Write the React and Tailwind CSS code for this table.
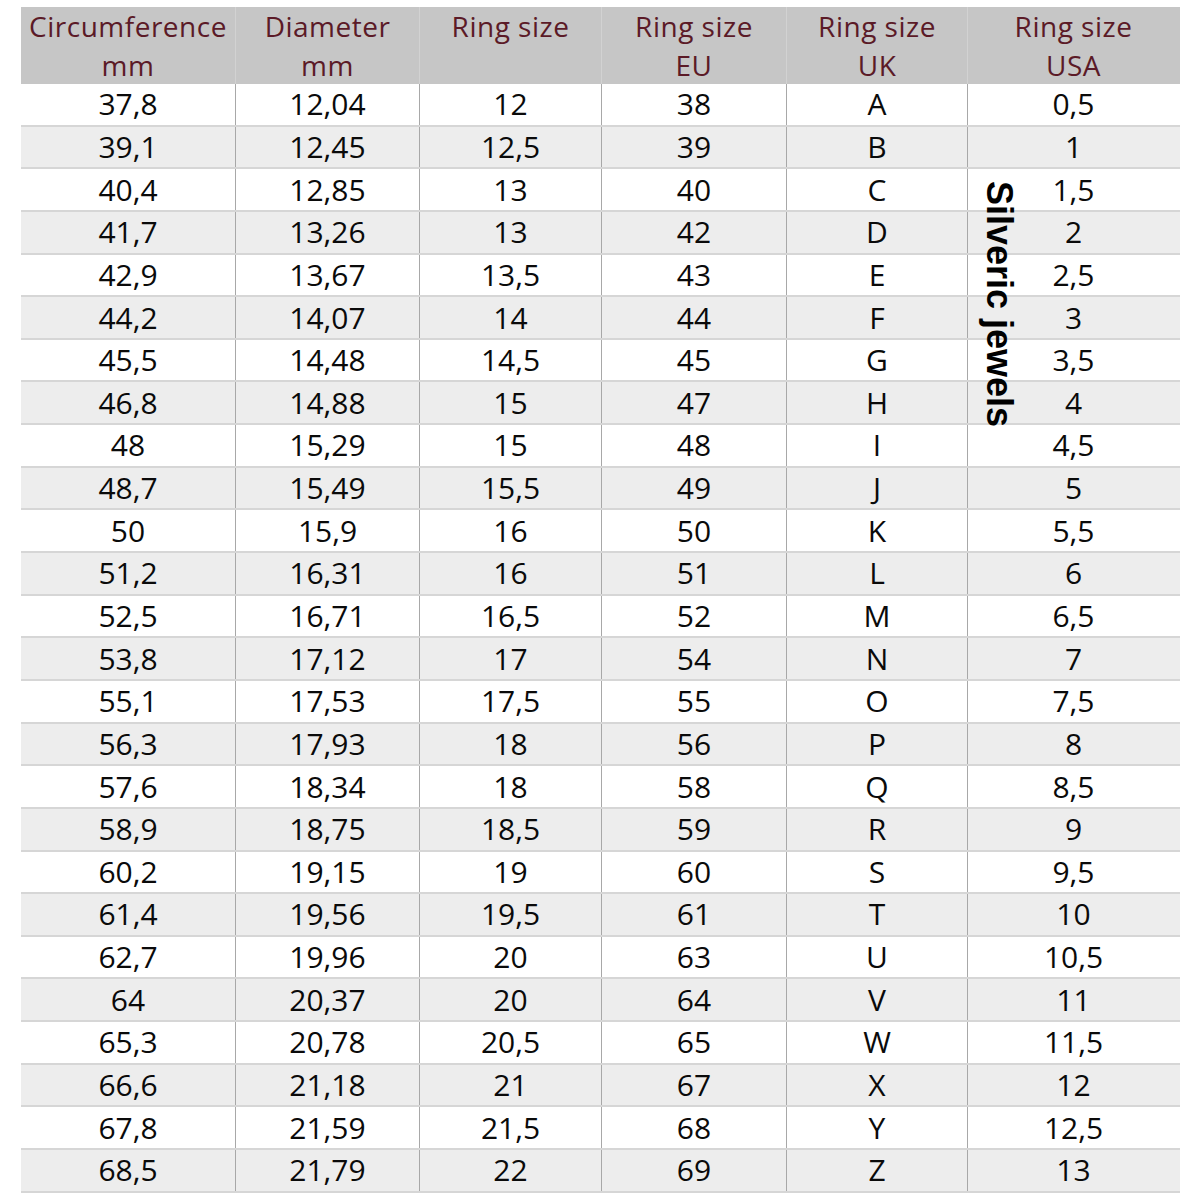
import React from "react";

const rows = [
  ["37,8", "12,04", "12", "38", "A", "0,5"],
  ["39,1", "12,45", "12,5", "39", "B", "1"],
  ["40,4", "12,85", "13", "40", "C", "1,5"],
  ["41,7", "13,26", "13", "42", "D", "2"],
  ["42,9", "13,67", "13,5", "43", "E", "2,5"],
  ["44,2", "14,07", "14", "44", "F", "3"],
  ["45,5", "14,48", "14,5", "45", "G", "3,5"],
  ["46,8", "14,88", "15", "47", "H", "4"],
  ["48", "15,29", "15", "48", "I", "4,5"],
  ["48,7", "15,49", "15,5", "49", "J", "5"],
  ["50", "15,9", "16", "50", "K", "5,5"],
  ["51,2", "16,31", "16", "51", "L", "6"],
  ["52,5", "16,71", "16,5", "52", "M", "6,5"],
  ["53,8", "17,12", "17", "54", "N", "7"],
  ["55,1", "17,53", "17,5", "55", "O", "7,5"],
  ["56,3", "17,93", "18", "56", "P", "8"],
  ["57,6", "18,34", "18", "58", "Q", "8,5"],
  ["58,9", "18,75", "18,5", "59", "R", "9"],
  ["60,2", "19,15", "19", "60", "S", "9,5"],
  ["61,4", "19,56", "19,5", "61", "T", "10"],
  ["62,7", "19,96", "20", "63", "U", "10,5"],
  ["64", "20,37", "20", "64", "V", "11"],
  ["65,3", "20,78", "20,5", "65", "W", "11,5"],
  ["66,6", "21,18", "21", "67", "X", "12"],
  ["67,8", "21,59", "21,5", "68", "Y", "12,5"],
  ["68,5", "21,79", "22", "69", "Z", "13"],
];

const headers = [
  ["Circumference", "mm"],
  ["Diameter", "mm"],
  ["Ring size", ""],
  ["Ring size", "EU"],
  ["Ring size", "UK"],
  ["Ring size", "USA"],
];

const cols = "grid grid-cols-[214px_184px_182px_185px_181px_212px]";

export default function App() {
  return (
    <div className="w-[1200px] h-[1200px] bg-white pt-[7px] pl-[21px]" style={{ fontFamily: '"Open Sans", "Noto Sans", sans-serif' }}>
      <div className="relative w-[1159px]">
        <div className={`${cols} h-[77px] bg-[#c6c6c6]`}>
          {headers.map((h, i) => (
            <div
              key={i}
              className={`flex flex-col items-center text-[28px] leading-[39px] tracking-[0.5px] text-[#5b1a27] ${i > 0 ? "border-l border-[#d2d2d2]" : ""}`}
            >
              <span>{h[0]}</span>
              {h[1] && <span>{h[1]}</span>}
            </div>
          ))}
        </div>
        {rows.map((r, ri) => (
          <div
            key={ri}
            className={`${cols} h-[42.65px] border-b-2 border-[#d6d6d6] ${ri % 2 === 0 ? "bg-white" : "bg-[#ededed]"}`}
          >
            {r.map((c, ci) => (
              <div
                key={ci}
                className={`flex items-center justify-center text-[30px] leading-none text-[#0a0a0a] ${ci > 0 ? "border-l border-[#a8a8a8]" : ""}`}
              >
                {c}
              </div>
            ))}
          </div>
        ))}
        <div
          className="absolute left-[848px] top-[279px] w-[260px] h-[36px] rotate-90 flex items-center justify-center text-[36px] font-bold leading-none text-black whitespace-nowrap"
          style={{ fontFamily: '"Liberation Sans", Arial, sans-serif' }}
        >
          Silveric jewels
        </div>
      </div>
    </div>
  );
}
